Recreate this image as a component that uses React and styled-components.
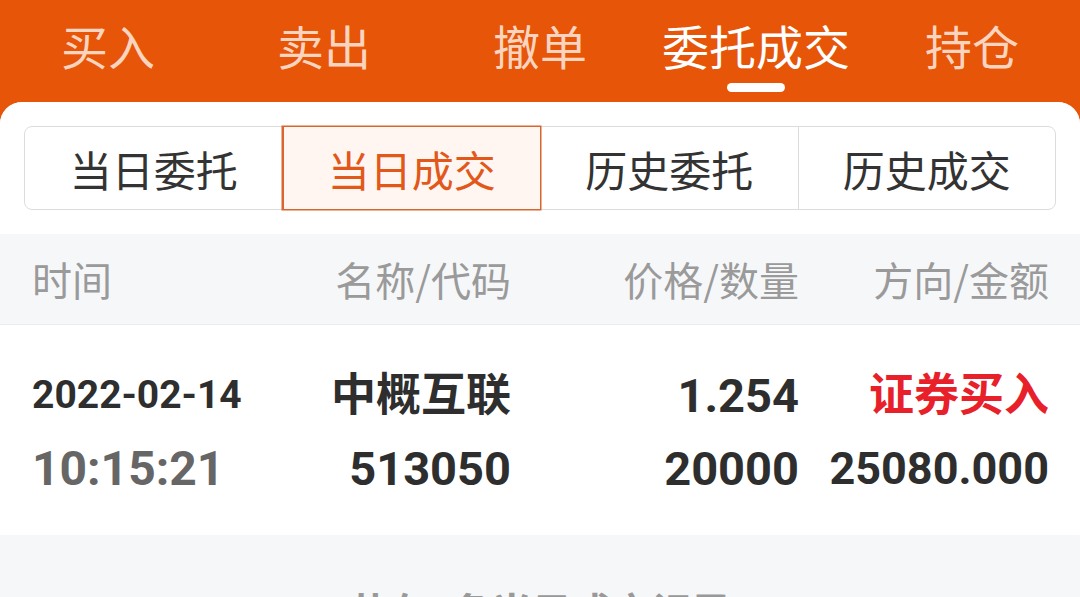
import React from "react"
import styled, { createGlobalStyle, css } from "styled-components"

const GlobalStyle = createGlobalStyle`
  html, body {
    margin: 0;
    padding: 0;
    background: #f6f7f9;
  }
  body {
    font-family: Roboto, "Noto Sans CJK SC", "Noto Sans", sans-serif;
    -webkit-font-smoothing: antialiased;
  }
`

const ORANGE = "#e65508"
const CJK = `"Noto Sans CJK SC", "Noto Sans", sans-serif`

const Page = styled.div`
  width: 1080px;
  height: 597px;
  overflow: hidden;
  background: ${ORANGE};
  display: flex;
  flex-direction: column;
`

const TopTabs = styled.ul`
  display: grid;
  grid-template-columns: repeat(5, 1fr);
  height: 102px;
  margin: 0;
  padding: 0;
`

const TopTab = styled.li`
  list-style: none;
  position: relative;
  display: flex;
  justify-content: center;
  padding-top: 15px;
  font-family: ${CJK};
  font-size: 47px;
  line-height: 60px;
  height: 60px;
  color: ${props => (props.active ? "#ffffff" : "#fbd4bf")};

  ${props =>
    props.active &&
    css`
      &::after {
        content: "";
        position: absolute;
        top: 83px;
        left: 50%;
        width: 58px;
        height: 9px;
        margin-left: -29px;
        border-radius: 5px;
        background: #fff;
      }
    `}
`

const Panel = styled.div`
  flex: 1;
  background: #f6f7f9;
  border-radius: 22px 22px 0 0;
  overflow: hidden;
`

const SegmentWrap = styled.div`
  background: #fff;
  padding: 24px;
`

const Segments = styled.div`
  display: grid;
  grid-template-columns: repeat(4, 1fr);
  height: 84px;
  border: 1.5px solid #dcdcdc;
  border-radius: 8px;
  box-sizing: border-box;
`

const Segment = styled.div`
  position: relative;
  display: flex;
  align-items: center;
  justify-content: center;
  font-family: ${CJK};
  font-size: 42px;
  color: #333;
  border-left: 1.5px solid #dcdcdc;

  &:first-child {
    border-left: none;
  }

  ${props =>
    props.active &&
    css`
      z-index: 1;
      color: #e2581a;
      background: #fff6f1;
      border-left-color: #d8662f;
      box-shadow: 0 0 0 1.5px #d8662f;
    `}
`

const Grid = styled.div`
  display: grid;
  grid-template-columns: 268px 211px 288px 250px;
  padding: 0 31px 0 32px;
`

const HeadRow = styled(Grid)`
  height: 90px;
  align-items: center;
  background: #f6f7f9;
  border-bottom: 1.5px solid #ececec;
  font-family: ${CJK};
  font-size: 40px;
  color: #9a9a9a;
`

const HeadCell = styled.div`
  text-align: ${props => (props.left ? "left" : "right")};
`

const DataRow = styled(Grid)`
  background: #fff;
  padding-top: 34px;
  padding-bottom: 30px;
`

const Cell = styled.div`
  display: flex;
  flex-direction: column;
  align-items: ${props => (props.left ? "flex-start" : "flex-end")};
`

const Line = styled.div`
  height: 73px;
  line-height: 73px;
  font-weight: 700;
  white-space: nowrap;
  font-size: ${props => props.size || 46}px;
  color: ${props => props.color || "#2e2e2e"};
`

const Footer = styled.div`
  padding-top: 46px;
  text-align: center;
  font-family: ${CJK};
  font-size: 40px;
  color: #999;
  font-weight: 700;
`

const tabs = ["买入", "卖出", "撤单", "委托成交", "持仓"]
const segments = ["当日委托", "当日成交", "历史委托", "历史成交"]

export default function App() {
  return (
    <>
      <GlobalStyle />
      <Page>
        <TopTabs>
          {tabs.map(t => (
            <TopTab key={t} active={t === "委托成交"}>
              {t}
            </TopTab>
          ))}
        </TopTabs>
        <Panel>
          <SegmentWrap>
            <Segments>
              {segments.map(s => (
                <Segment key={s} active={s === "当日成交"}>
                  {s}
                </Segment>
              ))}
            </Segments>
          </SegmentWrap>

          <HeadRow>
            <HeadCell left>时间</HeadCell>
            <HeadCell>名称/代码</HeadCell>
            <HeadCell>价格/数量</HeadCell>
            <HeadCell>方向/金额</HeadCell>
          </HeadRow>

          <DataRow>
            <Cell left>
              <Line size={39}>2022-02-14</Line>
              <Line size={48} color="#666">10:15:21</Line>
            </Cell>
            <Cell>
              <Line size={45}>中概互联</Line>
              <Line size={47}>513050</Line>
            </Cell>
            <Cell>
              <Line size={47}>1.254</Line>
              <Line size={47}>20000</Line>
            </Cell>
            <Cell>
              <Line size={45} color="#e8202a">证券买入</Line>
              <Line size={45}>25080.000</Line>
            </Cell>
          </DataRow>

          <Footer>共有1条当日成交记录</Footer>
        </Panel>
      </Page>
    </>
  )
}
